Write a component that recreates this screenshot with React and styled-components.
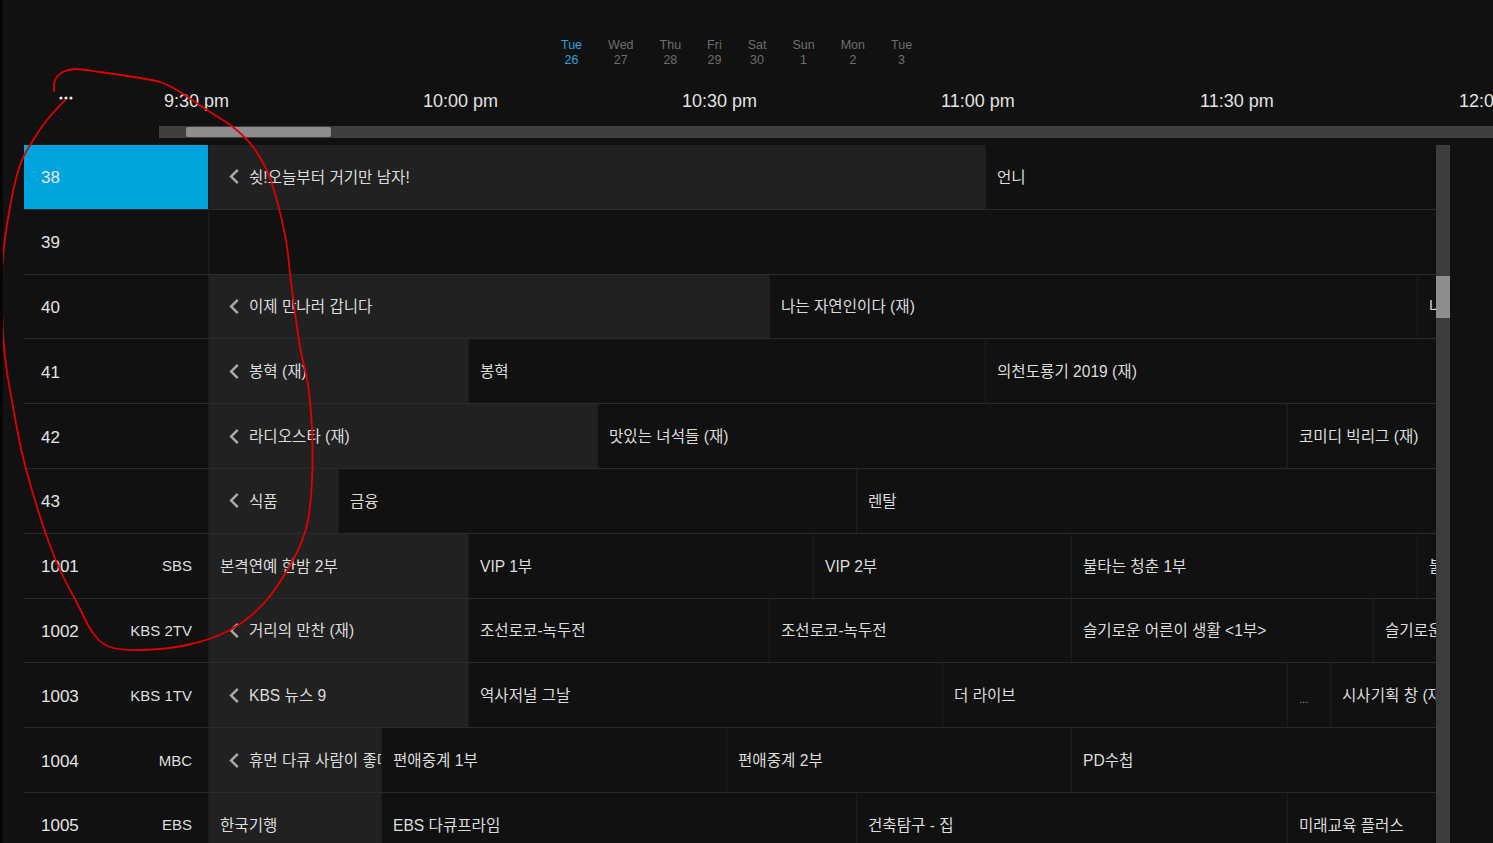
import React from 'react';
import styled, { createGlobalStyle } from 'styled-components';

const GlobalStyle = createGlobalStyle`
  html, body {
    margin: 0;
    padding: 0;
    background: #111111;
    overflow: hidden;
  }
  body {
    font-family: 'Liberation Sans', 'Noto Sans CJK KR', Arial, sans-serif;
    color: #dddddd;
  }
`;

const days = [
  { name: 'Tue', date: '26', active: true },
  { name: 'Wed', date: '27' },
  { name: 'Thu', date: '28' },
  { name: 'Fri', date: '29' },
  { name: 'Sat', date: '30' },
  { name: 'Sun', date: '1' },
  { name: 'Mon', date: '2' },
  { name: 'Tue', date: '3' },
];

const times = ['9:30 pm', '10:00 pm', '10:30 pm', '11:00 pm', '11:30 pm', '12:00 am'];

// w = width in px, cur = currently airing (lighter background), arrow = started earlier
const channels = [
  {
    num: '38', name: '', active: true,
    programs: [
      { w: 777, title: '쉿!오늘부터 거기만 남자!', cur: true, arrow: true },
      { title: '언니' },
    ],
  },
  { num: '39', name: '', programs: [{ title: '' }] },
  {
    num: '40', name: '',
    programs: [
      { w: 561, title: '이제 만나러 갑니다', cur: true, arrow: true },
      { w: 648, title: '나는 자연인이다 (재)' },
      { title: '나는 자연인이다 (재)' },
    ],
  },
  {
    num: '41', name: '',
    programs: [
      { w: 260, title: '봉혁 (재)', cur: true, arrow: true },
      { w: 517, title: '봉혁' },
      { title: '의천도룡기 2019 (재)' },
    ],
  },
  {
    num: '42', name: '',
    programs: [
      { w: 389, title: '라디오스타 (재)', cur: true, arrow: true },
      { w: 690, title: '맛있는 녀석들 (재)' },
      { title: '코미디 빅리그 (재)' },
    ],
  },
  {
    num: '43', name: '',
    programs: [
      { w: 130, title: '식품', cur: true, arrow: true },
      { w: 518, title: '금융' },
      { title: '렌탈' },
    ],
  },
  {
    num: '1001', name: 'SBS',
    programs: [
      { w: 260, title: '본격연예 한밤 2부', cur: true },
      { w: 345, title: 'VIP 1부' },
      { w: 258, title: 'VIP 2부' },
      { w: 346, title: '불타는 청춘 1부' },
      { title: '불타는 청춘 2부' },
    ],
  },
  {
    num: '1002', name: 'KBS 2TV',
    programs: [
      { w: 260, title: '거리의 만찬 (재)', cur: true, arrow: true },
      { w: 301, title: '조선로코-녹두전' },
      { w: 302, title: '조선로코-녹두전' },
      { w: 302, title: '슬기로운 어른이 생활 <1부>' },
      { title: '슬기로운 어른이 생활 <2부>' },
    ],
  },
  {
    num: '1003', name: 'KBS 1TV',
    programs: [
      { w: 260, title: 'KBS 뉴스 9', cur: true, arrow: true },
      { w: 474, title: '역사저널 그날' },
      { w: 345, title: '더 라이브' },
      { w: 43, title: '...', small: true },
      { title: '시사기획 창 (재)' },
    ],
  },
  {
    num: '1004', name: 'MBC',
    programs: [
      { w: 173, title: '휴먼 다큐 사람이 좋다', cur: true, arrow: true },
      { w: 345, title: '편애중계 1부' },
      { w: 345, title: '편애중계 2부' },
      { title: 'PD수첩' },
    ],
  },
  {
    num: '1005', name: 'EBS',
    programs: [
      { w: 173, title: '한국기행', cur: true },
      { w: 475, title: 'EBS 다큐프라임' },
      { w: 431, title: '건축탐구 - 집' },
      { title: '미래교육 플러스' },
    ],
  },
];

// red hand-drawn loop on top of the screenshot
const loop = [
  [54, 91], [55, 80], [63, 72], [75, 69], [100, 72], [140, 78], [160, 82], [177, 90],
  [207, 110], [233, 127], [253, 147], [270, 178], [285, 235], [292, 290], [300, 347],
  [308, 385], [312, 430], [312, 480], [307, 525], [293, 560], [265, 602], [230, 630],
  [187, 645], [140, 650], [110, 647], [93, 633], [77, 603], [60, 570], [48, 540],
  [37, 507], [23, 457], [13, 407], [5, 357], [2, 307], [3, 257], [10, 207], [20, 165],
  [32, 142], [47, 120], [65, 100],
];

const smoothPath = (pts) => {
  let d = `M${pts[0][0]} ${pts[0][1]}`;
  for (let i = 0; i < pts.length - 1; i++) {
    const p0 = pts[i - 1] || pts[i];
    const p1 = pts[i];
    const p2 = pts[i + 1];
    const p3 = pts[i + 2] || p2;
    const c1 = [p1[0] + (p2[0] - p0[0]) / 6, p1[1] + (p2[1] - p0[1]) / 6];
    const c2 = [p2[0] - (p3[0] - p1[0]) / 6, p2[1] - (p3[1] - p1[1]) / 6];
    d += ` C${c1[0].toFixed(1)} ${c1[1].toFixed(1)} ${c2[0].toFixed(1)} ${c2[1].toFixed(1)} ${p2[0]} ${p2[1]}`;
  }
  return d;
};

const Chevron = () => (
  <ChevronIcon viewBox="8 6 7.41 12" width="10" height="15">
    <path d="M15.41 7.41L14 6l-6 6 6 6 1.41-1.41L10.83 12z" fill="currentColor" />
  </ChevronIcon>
);

const App = () => {
  return (
    <Page>
      <GlobalStyle />

      <DayBar>
        {days.map((d, i) => (
          <DayItem key={i} $active={d.active}>
            <span>{d.name}</span>
            <span>{d.date}</span>
          </DayItem>
        ))}
      </DayBar>

      <TimeHeader>
        <Corner>
          <svg width="14" height="4" viewBox="0 0 14 4">
            <circle cx="2" cy="2" r="1.6" fill="#e6e6e6" />
            <circle cx="7" cy="2" r="1.6" fill="#e6e6e6" />
            <circle cx="12" cy="2" r="1.6" fill="#e6e6e6" />
          </svg>
        </Corner>
        <Timeline>
          {times.map((t) => (
            <TimeSlot key={t}>{t}</TimeSlot>
          ))}
        </Timeline>
      </TimeHeader>

      <HScroll>
        <HThumb />
      </HScroll>

      <GuideBody>
        <Grid>
          {channels.map((ch) => (
            <Row key={ch.num}>
              <ChannelCell $active={ch.active}>
                <ChannelNum>{ch.num}</ChannelNum>
                <ChannelName>{ch.name}</ChannelName>
              </ChannelCell>
              <Programs>
                {ch.programs.map((p, i) => (
                  <ProgramCell key={i} $w={p.w} $cur={p.cur} $arrow={p.arrow}>
                    {p.arrow && <Chevron />}
                    {p.small ? <Ellipsis>{p.title}</Ellipsis> : <Title>{p.title}</Title>}
                  </ProgramCell>
                ))}
              </Programs>
            </Row>
          ))}
        </Grid>
        <VScroll>
          <VThumb />
        </VScroll>
      </GuideBody>

      <Annotation width="1493" height="843" viewBox="0 0 1493 843">
        <path d={smoothPath(loop)} fill="none" stroke="#e10000" strokeWidth="1.8" strokeLinecap="round" />
      </Annotation>
    </Page>
  );
};

export default App;

const Page = styled.div`
  position: relative;
  width: 1493px;
  height: 843px;
  overflow: hidden;
  box-sizing: border-box;
  border-left: 3px solid #060606;
  padding-top: 38px;
  background: #111111;
`;

const DayBar = styled.div`
  display: flex;
  gap: 26px;
  padding-left: 558px;
`;

const DayItem = styled.div`
  display: flex;
  flex-direction: column;
  align-items: center;
  font-size: 12.5px;
  line-height: 15px;
  color: ${(p) => (p.$active ? '#1ea6df' : '#6e6e6e')};
`;

const TimeHeader = styled.div`
  display: flex;
  margin-top: 23px;
  height: 20px;
`;

const Corner = styled.div`
  width: 156px;
  flex-shrink: 0;
  display: flex;
  align-items: center;
  padding-left: 56px;
  box-sizing: border-box;
  margin-top: -7px;
`;

const Timeline = styled.div`
  display: flex;
  padding-left: 5px;
  white-space: nowrap;
`;

const TimeSlot = styled.div`
  width: 259px;
  flex-shrink: 0;
  font-size: 18px;
  line-height: 20px;
  color: #e2e2e2;
`;

const HScroll = styled.div`
  margin: 15px 0 0 156px;
  height: 12px;
  background: #3f3f3f;
  display: flex;
  align-items: center;
`;

const HThumb = styled.div`
  margin-left: 27px;
  width: 145px;
  height: 10px;
  border-radius: 2px;
  background: #8e8e8e;
`;

const GuideBody = styled.div`
  display: flex;
  margin-top: 7px;
  padding-left: 21px;
`;

const Grid = styled.div`
  width: 1412px;
  flex-shrink: 0;
  overflow: hidden;
`;

const Row = styled.div`
  display: flex;
  height: 64.8px;
  box-sizing: border-box;
  border-bottom: 1px solid #2a2a2a;
`;

const ChannelCell = styled.div`
  width: 184px;
  flex-shrink: 0;
  display: flex;
  align-items: center;
  justify-content: space-between;
  padding: 0 16px 0 17px;
  box-sizing: border-box;
  background: ${(p) => (p.$active ? '#00a4dc' : 'transparent')};
`;

const ChannelNum = styled.span`
  font-size: 17px;
  color: #e4e4e4;
  margin-top: 3px;
`;

const ChannelName = styled.span`
  font-size: 15px;
  color: #dedede;
`;

const Programs = styled.div`
  flex: 1;
  display: flex;
  overflow: hidden;
  min-width: 0;
`;

const ProgramCell = styled.div`
  ${(p) => (p.$w ? `width: ${p.$w}px; flex-shrink: 0;` : 'flex: 1 0 300px;')}
  display: flex;
  align-items: center;
  box-sizing: border-box;
  border-left: 1px solid #1c1c1c;
  padding-left: ${(p) => (p.$arrow ? '20px' : '11px')};
  padding-top: 2px;
  background: ${(p) => (p.$cur ? '#212121' : 'transparent')};
  overflow: hidden;
  white-space: nowrap;
`;

const ChevronIcon = styled.svg`
  flex-shrink: 0;
  color: #a8a8a8;
  margin-right: 10px;
  margin-top: -2px;
`;

const Title = styled.span`
  font-size: 15.6px;
  line-height: 20px;
  color: #dcdcdc;
`;

const Ellipsis = styled.span`
  font-size: 11px;
  line-height: 20px;
  color: #9a9a9a;
  margin-top: 6px;
`;

const VScroll = styled.div`
  width: 14px;
  height: 720px;
  flex-shrink: 0;
  background: #3c3c3c;
  padding-top: 131px;
  box-sizing: border-box;
`;

const VThumb = styled.div`
  height: 42px;
  background: #8e8e8e;
`;

const Annotation = styled.svg`
  position: absolute;
  left: -3px;
  top: 0;
  pointer-events: none;
`;
